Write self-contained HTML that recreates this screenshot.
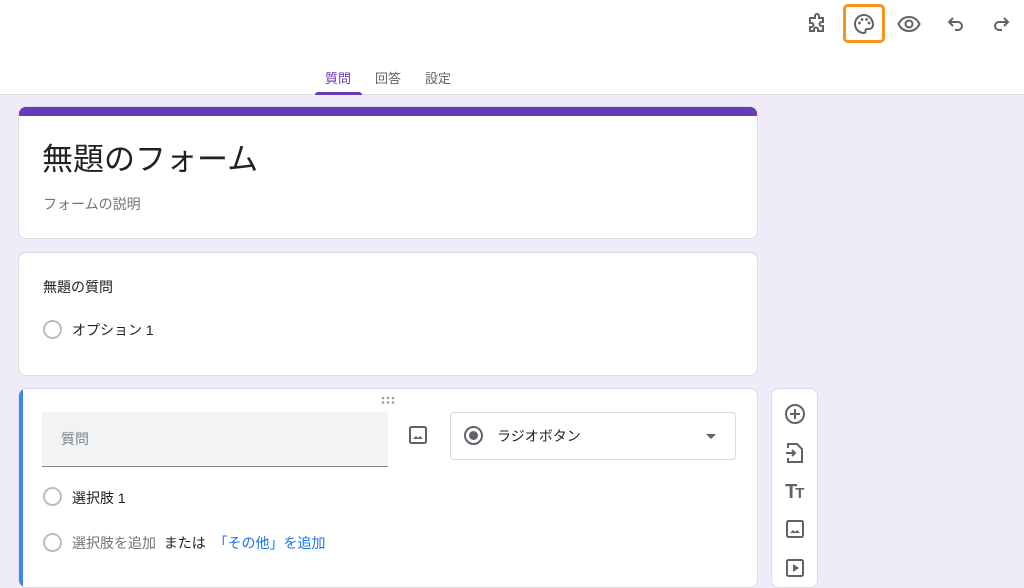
<!DOCTYPE html>
<html><head><meta charset="utf-8"><style>
*{margin:0;padding:0;box-sizing:border-box}
body{width:1024px;height:567px;overflow:hidden;background:#f0ebf8;font-family:"Liberation Sans","Noto Sans CJK JP",sans-serif;color:#202124;position:relative}
.hdr{position:absolute;left:0;top:0;width:1024px;height:95px;background:#fff;border-bottom:1px solid #dadce0}
.ic{position:absolute;top:12px;width:24px;height:24px}
.tab{position:absolute;top:68px;font-size:13px;color:#5f6368}
.card{position:absolute;left:18px;width:740px;background:#fff;border-radius:8px;border:1px solid #dadce0}
.radio{position:absolute;width:19px;height:19px;border:2px solid #bdbdbd;border-radius:50%}
.t{position:absolute;font-size:14px}
.side{position:absolute;left:771px;top:388px;width:47px;height:200px;background:#fff;border-radius:8px;border:1px solid #dadce0}
</style></head><body>
<div class="hdr">
<svg class="ic" style="left:805px" viewBox="0 0 24 24"><path d="M10 4a2 2 0 0 1 4 0v2h4v4h-1.5a2 2 0 0 0 0 4H18v5h-5v-1.5a2 2 0 0 0-4 0V19H5v-4h1.5a2 2 0 0 0 0-4H5V6h5z" fill="none" stroke="#5f6368" stroke-width="2"/></svg>
<div style="position:absolute;left:843px;top:4px;width:42px;height:39px;border:3px solid #f6941d;border-radius:5px"></div>
<svg class="ic" style="left:852px" viewBox="0 0 24 24"><path d="M12 3a9 9 0 0 0 0 18c1.2 0 1.8-.8 1.5-1.8-.4-1 .3-2.2 1.5-2.2h2a4 4 0 0 0 4-4c0-5.5-4-10-9-10z" fill="none" stroke="#5f6368" stroke-width="2"/><circle cx="7.5" cy="11" r="1.4" fill="#5f6368"/><circle cx="10" cy="7.5" r="1.4" fill="#5f6368"/><circle cx="14.5" cy="7.5" r="1.4" fill="#5f6368"/><circle cx="17" cy="11" r="1.4" fill="#5f6368"/></svg>
<svg class="ic" style="left:897px" viewBox="0 0 24 24"><path d="M1.5 12C4 7 8 5 12 5s8 2 10.5 7C20 17 16 19 12 19s-8-2-10.5-7z" fill="none" stroke="#5f6368" stroke-width="2"/><circle cx="12" cy="12" r="3.5" fill="none" stroke="#5f6368" stroke-width="2"/></svg>
<svg class="ic" style="left:944px" viewBox="0 0 24 24"><path d="M9 6L5 10l4 4M5 10h9a4 4 0 0 1 0 8h-3" fill="none" stroke="#5f6368" stroke-width="2"/></svg>
<svg class="ic" style="left:989px" viewBox="0 0 24 24"><path d="M15 6l4 4-4 4M19 10h-9a4 4 0 0 0 0 8h3" fill="none" stroke="#5f6368" stroke-width="2"/></svg>
<div class="tab" style="left:325px;color:#673ab7">質問</div>
<div class="tab" style="left:375px">回答</div>
<div class="tab" style="left:425px">設定</div>
<div style="position:absolute;left:315px;top:92px;width:47px;height:3px;background:#673ab7;border-radius:3px 3px 0 0"></div>
</div>
<div class="card" style="top:106px;height:133px;overflow:hidden">
<div style="height:10px;background:#673ab7;margin:-1px -1px 0"></div>
<div style="position:absolute;left:23px;top:27px;font-size:31px">無題のフォーム</div>
<div style="position:absolute;left:24px;top:87px;font-size:14px;color:#70757a">フォームの説明</div>
</div>
<div class="card" style="top:252px;height:124px">
<div class="t" style="left:24px;top:24px">無題の質問</div>
<div class="radio" style="left:24px;top:67px"></div>
<div class="t" style="left:53px;top:67px">オプション 1</div>
</div>
<div class="card" style="top:388px;height:200px;overflow:hidden">
<div style="position:absolute;left:-1px;top:-1px;width:5px;height:210px;background:#4285f4"></div>
<svg style="position:absolute;left:362px;top:7px" width="16" height="8"><g fill="#9aa0a6"><circle cx="2" cy="2" r="1.3"/><circle cx="7" cy="2" r="1.3"/><circle cx="12" cy="2" r="1.3"/><circle cx="2" cy="6.5" r="1.3"/><circle cx="7" cy="6.5" r="1.3"/><circle cx="12" cy="6.5" r="1.3"/></g></svg>
<div style="position:absolute;left:23px;top:23px;width:346px;height:55px;background:#f1f3f4;border-bottom:1px solid #80868b"></div>
<div class="t" style="left:42px;top:40px;color:#80868b">質問</div>
<svg style="position:absolute;left:390px;top:37px" width="18" height="18" viewBox="0 0 18 18"><rect x="1" y="1" width="16" height="16" rx="1.5" fill="none" stroke="#5f6368" stroke-width="2"/><path d="M4 13l3-3 2 2 2-2 3 3z" fill="#5f6368"/></svg>
<div style="position:absolute;left:431px;top:23px;width:286px;height:48px;border:1px solid #dadce0;border-radius:4px"></div>
<div style="position:absolute;left:445px;top:37px;width:19px;height:19px;border:2px solid #5f6368;border-radius:50%"></div>
<div style="position:absolute;left:450px;top:42px;width:9px;height:9px;background:#5f6368;border-radius:50%"></div>
<div class="t" style="left:478px;top:37px">ラジオボタン</div>
<div style="position:absolute;left:687px;top:45px;border:5px solid transparent;border-top-color:#5f6368"></div>
<div class="radio" style="left:24px;top:98px"></div>
<div class="t" style="left:53px;top:99px">選択肢 1</div>
<div class="radio" style="left:24px;top:144px"></div>
<div class="t" style="left:53px;top:144px;color:#70757a">選択肢を追加 <span style="color:#202124">&nbsp;または&nbsp;</span> <span style="color:#1a73e8">「その他」を追加</span></div>
</div>
<div class="side">
<svg style="position:absolute;left:12px;top:14px" width="22" height="22" viewBox="0 0 22 22"><circle cx="11" cy="11" r="9" fill="none" stroke="#5f6368" stroke-width="2"/><path d="M11 6v10M6 11h10" stroke="#5f6368" stroke-width="2"/></svg>
<svg style="position:absolute;left:13px;top:53px" width="20" height="22" viewBox="0 0 20 22"><path d="M3 6V2h9l5 5v13H3v-4" fill="none" stroke="#5f6368" stroke-width="2"/><path d="M1 11h9M7 8l3 3-3 3" fill="none" stroke="#5f6368" stroke-width="2"/></svg>
<div style="position:absolute;left:13px;top:92px;font-weight:bold;font-size:20px;color:#5f6368;letter-spacing:-2px">T<span style="font-size:15px">T</span></div>
<svg style="position:absolute;left:14px;top:131px" width="18" height="18" viewBox="0 0 18 18"><rect x="1" y="1" width="16" height="16" rx="1.5" fill="none" stroke="#5f6368" stroke-width="2"/><path d="M4 13l3-3 2 2 2-2 3 3z" fill="#5f6368"/></svg>
<svg style="position:absolute;left:14px;top:170px" width="18" height="18" viewBox="0 0 18 18"><rect x="1" y="1" width="16" height="16" rx="1.5" fill="none" stroke="#5f6368" stroke-width="2"/><path d="M7 5l6 4-6 4z" fill="#5f6368"/></svg>
</div>
</body></html>
